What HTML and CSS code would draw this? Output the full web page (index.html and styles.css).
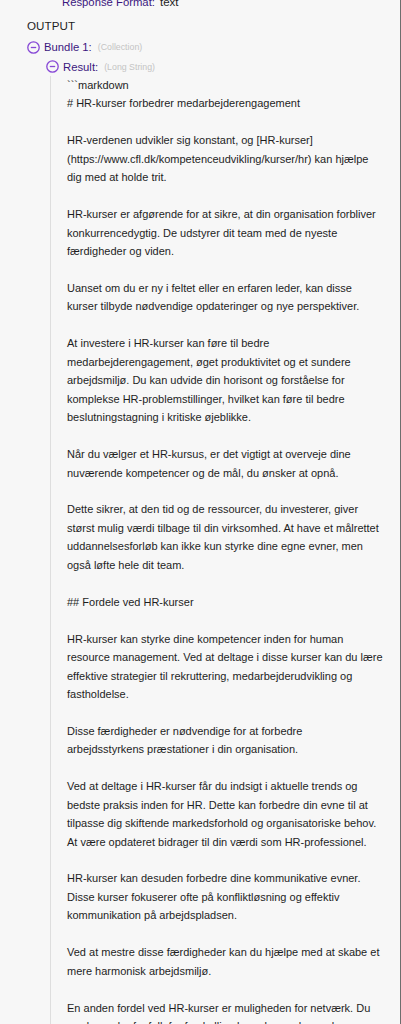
FILE: index.html
```html
<!DOCTYPE html>
<html lang="da">
<head>
<meta charset="utf-8">
<title>Output</title>
<link rel="stylesheet" href="styles.css">
</head>
<body>
<div class="panel">
  <div class="prev-row"><span class="key">Response Format:</span><span class="val">text</span></div>
  <div class="section-title">OUTPUT</div>
  <div class="node">
    <div class="node-row">
      <svg class="toggle" viewBox="0 0 13 13" width="13" height="13"><circle cx="6.5" cy="6.5" r="5.7" fill="none" stroke="#8748d6" stroke-width="1.3"/><line x1="3.8" y1="6.5" x2="9.2" y2="6.5" stroke="#8748d6" stroke-width="1.3"/></svg>
      <span class="key">Bundle 1:</span><span class="type">(Collection)</span>
    </div>
    <div class="children">
      <div class="node">
        <div class="node-row">
          <svg class="toggle" viewBox="0 0 13 13" width="13" height="13"><circle cx="6.5" cy="6.5" r="5.7" fill="none" stroke="#8748d6" stroke-width="1.3"/><line x1="3.8" y1="6.5" x2="9.2" y2="6.5" stroke="#8748d6" stroke-width="1.3"/></svg>
          <span class="key">Result:</span><span class="type">(Long String)</span>
        </div>
        <div class="value">```markdown
# HR-kurser forbedrer medarbejderengagement

HR-verdenen udvikler sig konstant, og [HR-kurser]
(https://www.cfl.dk/kompetenceudvikling/kurser/hr) kan hjælpe
dig med at holde trit.

HR-kurser er afgørende for at sikre, at din organisation forbliver
konkurrencedygtig. De udstyrer dit team med de nyeste
færdigheder og viden.

Uanset om du er ny i feltet eller en erfaren leder, kan disse
kurser tilbyde nødvendige opdateringer og nye perspektiver.

At investere i HR-kurser kan føre til bedre
medarbejderengagement, øget produktivitet og et sundere
arbejdsmiljø. Du kan udvide din horisont og forståelse for
komplekse HR-problemstillinger, hvilket kan føre til bedre
beslutningstagning i kritiske øjeblikke.

Når du vælger et HR-kursus, er det vigtigt at overveje dine
nuværende kompetencer og de mål, du ønsker at opnå.

Dette sikrer, at den tid og de ressourcer, du investerer, giver
størst mulig værdi tilbage til din virksomhed. At have et målrettet
uddannelsesforløb kan ikke kun styrke dine egne evner, men
også løfte hele dit team.

## Fordele ved HR-kurser

HR-kurser kan styrke dine kompetencer inden for human
resource management. Ved at deltage i disse kurser kan du lære
effektive strategier til rekruttering, medarbejderudvikling og
fastholdelse.

Disse færdigheder er nødvendige for at forbedre
arbejdsstyrkens præstationer i din organisation.

Ved at deltage i HR-kurser får du indsigt i aktuelle trends og
bedste praksis inden for HR. Dette kan forbedre din evne til at
tilpasse dig skiftende markedsforhold og organisatoriske behov.
At være opdateret bidrager til din værdi som HR-professionel.

HR-kurser kan desuden forbedre dine kommunikative evner.
Disse kurser fokuserer ofte på konfliktløsning og effektiv
kommunikation på arbejdspladsen.

Ved at mestre disse færdigheder kan du hjælpe med at skabe et
mere harmonisk arbejdsmiljø.

En anden fordel ved HR-kurser er muligheden for netværk. Du
møder andre fagfolk fra forskellige brancher og kan opbygge
værdifulde relationer.</div>
      </div>
    </div>
  </div>
</div>
</body>
</html>
```

FILE: styles.css
```css
html, body {
  margin: 0;
  padding: 0;
  background: #f7f7f7;
  overflow: hidden;
}

body {
  font-family: "Liberation Sans", Arial, sans-serif;
  font-size: 11px;
  color: #1e1e1e;
}

.panel {
  width: 401px;
  height: 1024px;
  box-sizing: border-box;
  border-right: 1px solid #6e6e6e;
  overflow: hidden;
  padding-left: 27px;
}

.prev-row {
  margin-top: -7px;
  height: 18px;
  line-height: 18px;
  padding-left: 35px;
  display: flex;
  gap: 5px;
  font-size: 11.5px;
}

.key {
  color: #3c1780;
  font-size: 11.3px;
}

.val {
  color: #1e1e1e;
}

.section-title {
  margin-top: 6px;
  height: 18px;
  line-height: 18px;
  font-size: 11.6px;
  letter-spacing: 0.1px;
  color: #1e1e1e;
}

.node-row {
  display: flex;
  align-items: center;
  height: 20px;
}

.node > .node-row {
  margin-top: 2px;
}

.children .node > .node-row {
  margin-top: 0;
  height: 19px;
}

.toggle {
  flex: none;
  margin-right: 4px;
}

.type {
  color: #c4c4c4;
  font-size: 8.8px;
  margin-left: 6px;
}

.children {
  padding-left: 19px;
}

.value {
  margin-left: 4px;
  border-left: 1px solid #dedede;
  padding-left: 16px;
  white-space: pre;
  font-size: 11px;
  line-height: 18.46px;
  color: #1e1e1e;
}
```
